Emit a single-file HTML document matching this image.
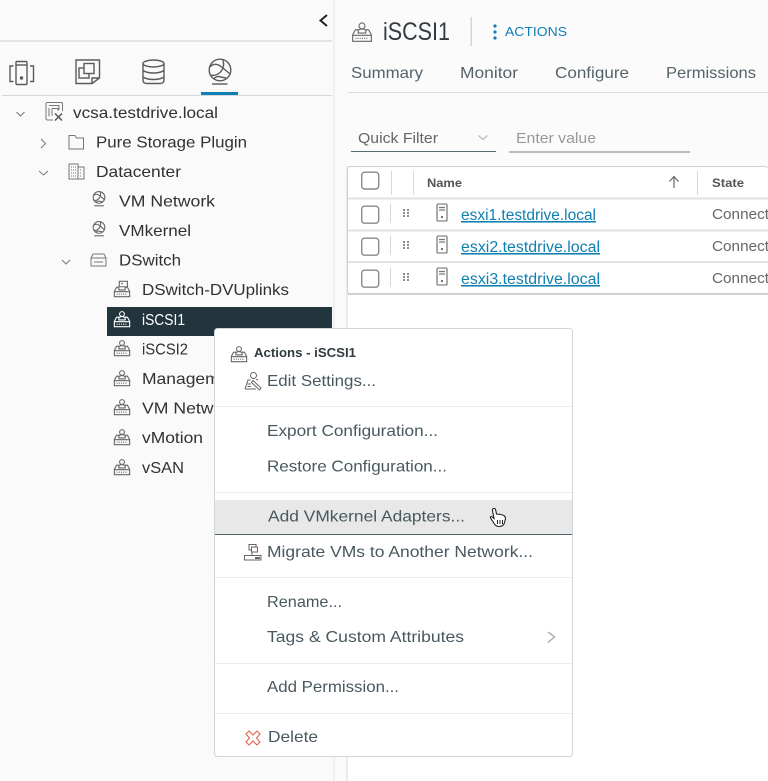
<!DOCTYPE html>
<html lang="en">
<head>
<meta charset="utf-8">
<title>iSCSI1</title>
<style>
html,body{margin:0;padding:0;width:768px;height:781px;overflow:hidden;background:#fff}
svg{display:block}
text{font-family:"Liberation Sans",sans-serif;font-size:16px;fill:#313131}
.h{font-size:16px;fill:#48585f}
.l{fill:#0f7fb0;font-size:15.5px;text-decoration:underline}
.s{font-size:15px;fill:#666}
.b{font-weight:bold;font-size:12px;fill:#555}
.i{fill:none;stroke:#666;stroke-width:1.100;vector-effect:non-scaling-stroke}
.d{fill:none;stroke:#777;stroke-width:1.200;stroke-dasharray:1 1.200;vector-effect:non-scaling-stroke}
.w{fill:none;stroke:#fff;stroke-width:1.100;vector-effect:non-scaling-stroke}
.wd{fill:none;stroke:#fff;stroke-width:1.200;stroke-dasharray:1 1.200;vector-effect:non-scaling-stroke}
</style>
</head>
<body>
<svg width="768" height="781" viewBox="0 0 768 781" xmlns="http://www.w3.org/2000/svg">
<defs>
<symbol id="pg" viewBox="0 0 20 20" overflow="visible">
  <path class="i" d="M1.500 18.500V12.500L4 8H6.500V11H13.500V8H16L18.500 12.500V18.500ZM1.500 13H18.500"/>
  <path class="d" d="M4 15.800H16"/>
  <circle class="i" cx="10" cy="4.500" r="2.700"/>
  <path class="i" d="M6.500 8.500Q10 6 13.500 8.500"/>
</symbol>
<symbol id="pgw" viewBox="0 0 20 20" overflow="visible">
  <path class="w" d="M1.500 18.500V12.500L4 8H6.500V11H13.500V8H16L18.500 12.500V18.500ZM1.500 13H18.500"/>
  <path class="wd" d="M4 15.800H16"/>
  <circle class="w" cx="10" cy="4.500" r="2.700"/>
  <path class="w" d="M6.500 8.500Q10 6 13.500 8.500"/>
</symbol>
<symbol id="pg2" viewBox="0 0 20 20" overflow="visible">
  <path class="i" d="M1.500 18.500V12.500L4 8H6.500V11H13.500V8H16L18.500 12.500V18.500ZM1.500 13H18.500"/>
  <path class="d" d="M4 15.800H16"/>
  <rect class="i" x="7" y="1.500" width="9" height="6"/>
  <path class="i" d="M9 4H11"/>
</symbol>
<symbol id="net" viewBox="0 0 20 20" overflow="visible">
  <circle class="i" cx="10" cy="8" r="7.300"/>
  <path class="i" d="M3 6C5 3.500 8 3.500 10.500 5.500L16.500 10.500M3.500 11.500C7 12.500 11 10 12 5C12.200 3.800 12 2.500 11.500 1.200M6 14C8 12.500 9 12 10.500 12.800L14 13.500"/>
  <path class="i" d="M4 18.500H16"/>
</symbol>
<symbol id="host" viewBox="0 0 12 20" overflow="visible">
  <rect x="1" y="1" width="10" height="17" rx="1" fill="none" stroke="#666" stroke-width="1.100"/>
  <path d="M3 4.500H9M3 7H9" stroke="#777" stroke-width="1.300"/>
  <circle cx="6" cy="14" r="1.100" fill="#666"/>
</symbol>
<symbol id="grip" viewBox="0 0 6 8" overflow="visible">
  <path d="M0 0h2v2H0zM4 0h2v2H4zM0 3h2v2H0zM4 3h2v2H4zM0 6h2v2H0zM4 6h2v2H4z" fill="#8a8a8a"/>
</symbol>
</defs>

<!-- backgrounds -->
<rect width="768" height="781" fill="#fff"/>
<rect width="333" height="781" fill="#fafafa"/>
<rect x="333" width="2" height="781" fill="#f0f0f0"/>
<rect x="335" width="12" height="781" fill="#fafafa"/>
<rect x="346" y="166" width="2" height="615" fill="#ececec"/>
<rect x="347" width="421" height="166" fill="#fbfbfb"/>

<!-- left head -->
<path d="M327 15L320.500 20.500L327 26" fill="none" stroke="#222" stroke-width="2"/>
<rect y="40" width="332" height="2" fill="#e4e4e4"/>
<rect x="2" y="95" width="330" height="1" fill="#d5d9dc"/>
<rect x="201" y="92" width="37" height="3" fill="#0f7fb5"/>

<!-- tab icons -->
<g fill="none" stroke="#5a5a5a" stroke-width="1.400">
  <path d="M13.500 66H10V81.500H13.500M30 66H33.500V81.500H30"/>
  <rect x="16" y="61.500" width="11" height="23" rx="1"/>
  <path d="M16 65H27"/>
  <circle cx="21.500" cy="78" r="1" fill="#5a5a5a"/>
  <path d="M76 60H99.500V78L92 83.500H76ZM92 83.500V78H99.500"/>
  <rect x="79" y="68" width="10" height="10"/>
  <rect x="84" y="63.500" width="10" height="10" fill="#fafafa"/>
  <ellipse cx="153.500" cy="63.500" rx="10.500" ry="3.500"/>
  <path d="M143 63.500V80Q143 83.500 147 83.500H160Q164 83.500 164 80V63.500M143 70.500Q147 73 153.500 73T164 70.500M143 77Q147 79.500 153.500 79.500T164 77"/>
  <circle cx="220" cy="70" r="10.800"/>
  <path d="M210 67C213 63.500 217 63.500 221 66.500L229.500 73.500M211 75C216 76.500 222 73 223.500 66C223.800 64 223.500 62 223 60M214 78.500C216.500 76.500 218 76 220.500 77L226 78"/>
  <path d="M212 84H227.500"/>
</g>

<!-- tree -->
<g fill="none" stroke="#777" stroke-width="1">
  <path d="M16.500 112L20.500 116L24.500 112"/>
  <path d="M41 139L45.500 143.500L41 148"/>
  <path d="M39 171L43.500 175L48 171"/>
  <path d="M62 260L66 264L70 260"/>
  <!-- vcsa icon -->
  <path d="M46 104V118.500Q46 120 47.500 120H53M46 104Q46 102.500 47.500 102.500H61Q62.500 102.500 62.500 104V111"/>
  <path d="M49 108V116.500M49 105.500H59V110M52 108.500H58V111M52 108.500V116"/>
  <path d="M55 113.500L62 120.500M62 113.500L55 120.500" stroke="#555" stroke-width="1.500"/>
  <!-- folder -->
  <path d="M69 135.500H75L76.500 138H83.500V149H69Z"/>
  <!-- datacenter -->
  <path d="M69 164H78V179H69ZM78 167H84V179H78Z"/>
  <path d="M71 167H76M71 170H76M71 173H76M71 176H76M80 170H82M80 173H82M80 176H82" stroke-dasharray="1 1"/>
  <!-- dswitch -->
  <path d="M91 258L93 254H104L106 258V266H91ZM91 258H106M94 262H103"/>
</g>
<use href="#net" x="91" y="191" width="16" height="16"/>
<use href="#net" x="91" y="221" width="16" height="16"/>
<use href="#pg2" x="113" y="280" width="18" height="18"/>
<rect x="107" y="307" width="225" height="29" fill="#22343c"/>
<use href="#pgw" x="113" y="310" width="18" height="18"/>
<use href="#pg" x="113" y="339" width="18" height="18"/>
<use href="#pg" x="113" y="369" width="18" height="18"/>
<use href="#pg" x="113" y="398" width="18" height="18"/>
<use href="#pg" x="113" y="428" width="18" height="18"/>
<use href="#pg" x="113" y="458" width="18" height="18"/>

<text x="73" y="118" textLength="145" lengthAdjust="spacingAndGlyphs">vcsa.testdrive.local</text>
<text x="96" y="147.500" textLength="151" lengthAdjust="spacingAndGlyphs">Pure Storage Plugin</text>
<text x="96" y="177" textLength="85" lengthAdjust="spacingAndGlyphs">Datacenter</text>
<text x="119" y="206.500" textLength="96" lengthAdjust="spacingAndGlyphs">VM Network</text>
<text x="119" y="236" textLength="72" lengthAdjust="spacingAndGlyphs">VMkernel</text>
<text x="119" y="265.500" textLength="62" lengthAdjust="spacingAndGlyphs">DSwitch</text>
<text x="142" y="295" textLength="147" lengthAdjust="spacingAndGlyphs">DSwitch-DVUplinks</text>
<text x="142" y="325" textLength="43" lengthAdjust="spacingAndGlyphs" style="fill:#fff">iSCSI1</text>
<text x="142" y="354.500" textLength="46" lengthAdjust="spacingAndGlyphs">iSCSI2</text>
<text x="142" y="384" textLength="102" lengthAdjust="spacingAndGlyphs">Management</text>
<text x="142" y="413.500" textLength="96" lengthAdjust="spacingAndGlyphs">VM Network</text>
<text x="142" y="443" textLength="61" lengthAdjust="spacingAndGlyphs">vMotion</text>
<text x="142" y="473" textLength="42" lengthAdjust="spacingAndGlyphs">vSAN</text>

<!-- right head -->
<use href="#pg" x="351" y="21" width="22" height="22"/>
<text x="383" y="40" textLength="67" lengthAdjust="spacingAndGlyphs" style="font-size:25px;fill:#313b40">iSCSI1</text>
<rect x="470.500" y="17" width="1.500" height="29" fill="#d5d5d5"/>
<circle cx="495" cy="26" r="1.600" fill="#0f7fb5"/><circle cx="495" cy="32" r="1.600" fill="#0f7fb5"/><circle cx="495" cy="38" r="1.600" fill="#0f7fb5"/>
<text x="505" y="36" textLength="62" lengthAdjust="spacingAndGlyphs" style="font-size:12.500px;fill:#0f7fb5">ACTIONS</text>
<text x="351" y="78" textLength="72" lengthAdjust="spacingAndGlyphs" style="fill:#54636a">Summary</text>
<text x="460" y="78" textLength="58" lengthAdjust="spacingAndGlyphs" style="fill:#54636a">Monitor</text>
<text x="555" y="78" textLength="74" lengthAdjust="spacingAndGlyphs" style="fill:#54636a">Configure</text>
<text x="666" y="78" textLength="90" lengthAdjust="spacingAndGlyphs" style="fill:#54636a">Permissions</text>
<rect x="347" y="92" width="421" height="1" fill="#d8dde0"/>

<!-- filters -->
<text x="358" y="143" textLength="80" lengthAdjust="spacingAndGlyphs" style="font-size:15px;fill:#666">Quick Filter</text>
<path d="M478.500 135.500L483 139.500L487.500 135.500" fill="none" stroke="#aaa" stroke-width="1"/>
<rect x="351" y="151" width="145" height="1" fill="#5a6a72"/>
<text x="516" y="143" textLength="80" lengthAdjust="spacingAndGlyphs" style="font-size:15px;fill:#999">Enter value</text>
<rect x="509" y="151" width="181" height="2" fill="#bdbdbd"/>

<!-- table -->
<rect x="347.500" y="166.500" width="421" height="128" rx="3" fill="#fff" stroke="#d0d0d0"/>
<rect x="348" y="197.500" width="420" height="2" fill="#e2e2e2"/>
<rect x="348" y="229.500" width="420" height="2" fill="#e2e2e2"/>
<rect x="348" y="261" width="420" height="2" fill="#e2e2e2"/>
<rect x="348" y="293" width="420" height="2" fill="#d0d0d0"/>
<g fill="#fff" stroke="#8a8a8a" stroke-width="1.400">
  <rect x="361.700" y="172.200" width="17" height="16.800" rx="3"/>
  <rect x="361.700" y="206.200" width="17" height="17" rx="3"/>
  <rect x="361.700" y="238.200" width="17" height="17" rx="3"/>
  <rect x="361.700" y="270.200" width="17" height="17" rx="3"/>
</g>
<g fill="#d8d8d8">
  <rect x="391" y="171" width="1" height="24"/><rect x="413" y="171" width="1" height="24"/><rect x="697" y="171" width="1" height="24"/>
  <rect x="390" y="204" width="1" height="19"/><rect x="390" y="236" width="1" height="19"/><rect x="390" y="268" width="1" height="19"/>
</g>
<text x="427" y="187" textLength="35" lengthAdjust="spacingAndGlyphs" class="b">Name</text>
<path d="M674 188V177M669.500 181.500L674 176.500L678.500 181.500" fill="none" stroke="#666" stroke-width="1.200"/>
<text x="712" y="187" textLength="32" lengthAdjust="spacingAndGlyphs" class="b">State</text>
<use href="#grip" x="403" y="209" width="6" height="8"/>
<use href="#grip" x="403" y="241" width="6" height="8"/>
<use href="#grip" x="403" y="273" width="6" height="8"/>
<use href="#host" x="436" y="203" width="12" height="20"/>
<use href="#host" x="436" y="235" width="12" height="20"/>
<use href="#host" x="436" y="267" width="12" height="20"/>
<text x="461" y="220" textLength="135" lengthAdjust="spacingAndGlyphs" class="l">esxi1.testdrive.local</text>
<text x="461" y="252" textLength="139" lengthAdjust="spacingAndGlyphs" class="l">esxi2.testdrive.local</text>
<text x="461" y="284" textLength="139" lengthAdjust="spacingAndGlyphs" class="l">esxi3.testdrive.local</text>
<text x="712" y="219" textLength="57" lengthAdjust="spacingAndGlyphs" class="s">Connect</text>
<text x="712" y="251" textLength="57" lengthAdjust="spacingAndGlyphs" class="s">Connect</text>
<text x="712" y="283" textLength="57" lengthAdjust="spacingAndGlyphs" class="s">Connect</text>

<!-- context menu -->
<rect x="214.500" y="328.500" width="358" height="428" rx="3" fill="#fff" stroke="#cfd6da"/>
<use href="#pg" x="230" y="345" width="18" height="18"/>
<text x="254" y="357" textLength="102" lengthAdjust="spacingAndGlyphs" style="font-size:12.500px;font-weight:bold;fill:#313b40">Actions - iSCSI1</text>
<g fill="none" stroke="#666" stroke-width="1">
  <path d="M245 389L248 380H250.500M256 379.500L258 380"/>
  <circle cx="253.500" cy="375.500" r="3"/>
  <path d="M245 389H256M247.500 384H251M247.500 386.500H251"/>
  <path d="M253 380.500L261 388L259.500 390L251.500 382.500Z"/>
</g>
<text x="267" y="386" textLength="109" lengthAdjust="spacingAndGlyphs" class="h">Edit Settings...</text>
<rect x="215" y="406" width="357" height="1" fill="#e8eef1"/>
<text x="267" y="436" textLength="171" lengthAdjust="spacingAndGlyphs" class="h">Export Configuration...</text>
<text x="267" y="471.500" textLength="180" lengthAdjust="spacingAndGlyphs" class="h">Restore Configuration...</text>
<rect x="215" y="492" width="357" height="1" fill="#e8eef1"/>
<rect x="215" y="500" width="357" height="34" fill="#e8e8e8"/>
<rect x="215" y="534" width="357" height="1" fill="#56646b"/>
<text x="268" y="521.500" textLength="197" lengthAdjust="spacingAndGlyphs" class="h">Add VMkernel Adapters...</text>
<!-- hand cursor -->
<path d="M493.500 508.500C495 508 495.500 509 495.800 510.500L496.500 514L501 514.500C504 515 505.500 516 505.500 518.500L504.500 522.500C504 525 502 526.500 499 526.500C496 526.500 495 525 493.500 522.500L490.500 518C490 516.500 491.500 516 492.800 517.500L494 518.500L492.500 510.500C492.300 509.500 492.700 508.800 493.500 508.500Z" fill="#fff" stroke="#222" stroke-width="1.100"/>
<path d="M497.500 520V524M500 520V524M502.500 520V524" stroke="#222" stroke-width="1"/>
<g fill="none" stroke="#666" stroke-width="1">
  <rect x="249" y="544.500" width="7" height="5.500"/><rect x="251.500" y="547" width="6" height="5" fill="#fff"/>
  <path d="M252 552V555M244.500 555.500H261V560H244.500Z"/>
  <rect x="255" y="557" width="5" height="2" fill="#666" stroke="none"/>
</g>
<text x="267" y="557" textLength="266" lengthAdjust="spacingAndGlyphs" class="h">Migrate VMs to Another Network...</text>
<rect x="215" y="577" width="357" height="1" fill="#e8eef1"/>
<text x="267" y="607" textLength="75" lengthAdjust="spacingAndGlyphs" class="h">Rename...</text>
<text x="267" y="642" textLength="197" lengthAdjust="spacingAndGlyphs" class="h">Tags &amp; Custom Attributes</text>
<path d="M548 632L554.500 637L548 642.500" fill="none" stroke="#aaa" stroke-width="1.400"/>
<rect x="215" y="663" width="357" height="1" fill="#e8eef1"/>
<text x="267" y="692" textLength="132" lengthAdjust="spacingAndGlyphs" class="h">Add Permission...</text>
<rect x="215" y="713" width="357" height="1" fill="#e8eef1"/>
<path d="M249 731L253 735L257 731L260 734L256.500 738L260 742L257 745L253 741L249 745L246 742L249.500 738L246 734Z" fill="none" stroke="#e8604a" stroke-width="1.100"/>
<text x="268" y="742" textLength="50" lengthAdjust="spacingAndGlyphs" class="h">Delete</text>
</svg>
</body>
</html>
